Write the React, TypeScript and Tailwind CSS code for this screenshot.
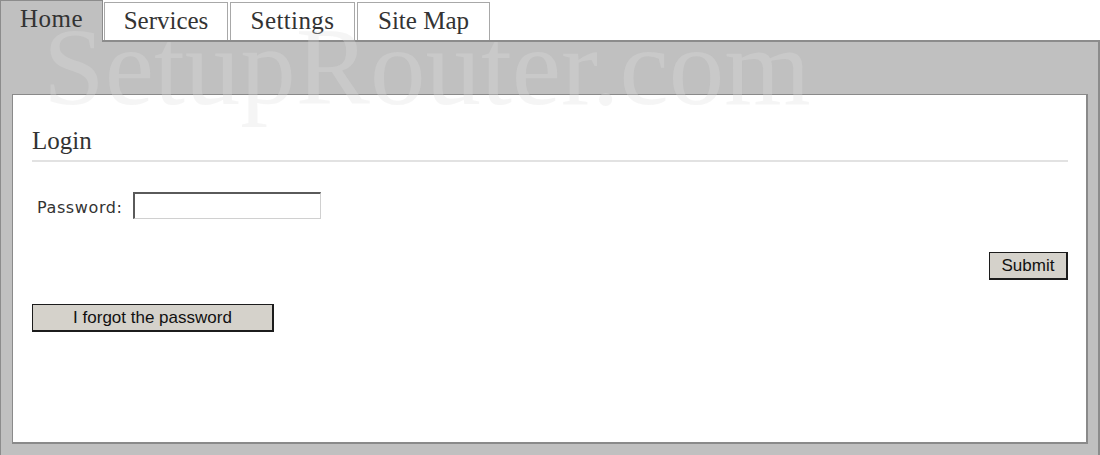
import React from "react";

const serif = "font-['Liberation_Serif','Times_New_Roman',serif]";
const sans = "font-['Liberation_Sans',Arial,sans-serif]";

export default function App() {
  return (
    <div className="relative w-[1100px] h-[455px] bg-white overflow-hidden flex flex-col">
      {/* Tabs */}
      <div className={`flex items-end h-[40px] ${serif} text-[25px] leading-[25px] text-[#333]`}>
        <div className="relative z-10 w-[103px] h-[42px] -mb-[2px] bg-[#c0c0c0] border-l border-t border-r border-[#8c8c8c] pt-[5px] text-center tracking-[0.5px]">
          Home
        </div>
        <div className="ml-[1px] w-[124px] h-[38px] bg-white border border-b-0 border-[#a8a8a8] pt-[5px] text-center">
          Services
        </div>
        <div className="ml-[2px] w-[125px] h-[38px] bg-white border border-b-0 border-[#a8a8a8] pt-[5px] text-center tracking-[0.4px]">
          Settings
        </div>
        <div className="ml-[2px] w-[133px] h-[38px] bg-white border border-b-0 border-[#a8a8a8] pt-[5px] text-center">
          Site Map
        </div>
      </div>

      {/* Panel */}
      <div className="flex-1 bg-[#c0c0c0] border-t-2 border-l border-r-2 border-[#8c8c8c] pt-[52px] pl-[11px] pr-[10px]">
        <div className="h-[350px] bg-white border border-r-2 border-b-2 border-[#8a8a8a] pt-[33px] pl-[19px] pr-[18px]">
          <div className={`${serif} text-[25px] leading-[25px] text-[#333]`}>Login</div>
          <div className="mt-[7px] border-t-2 border-[#e2e2e2]" />

          <div className="mt-[30px] flex items-center h-[27px]">
            <span className="ml-[5px] pt-[4px] font-['DejaVu_Sans',sans-serif] text-[16px] leading-[20px] tracking-[0.6px] text-[#333]">
              Password:
            </span>
            <input
              type="password"
              className="ml-[10px] w-[188px] h-[27px] bg-white border border-t-2 border-l-2 border-t-[#5a5a5a] border-l-[#5a5a5a] border-r-[#d0d0d0] border-b-[#d0d0d0] outline-none"
            />
          </div>

          <div className="mt-[33px] flex justify-end">
            <button
              className={`w-[79px] h-[28px] bg-[#d5d2cb] border border-r-2 border-b-2 border-[#1c1c1c] ${sans} text-[17px] leading-none text-[#111]`}
            >
              Submit
            </button>
          </div>

          <div className="mt-[24px]">
            <button
              className={`w-[242px] h-[28px] bg-[#d5d2cb] border border-r-2 border-b-2 border-[#1c1c1c] ${sans} text-[17px] leading-none text-[#111]`}
            >
              I forgot the password
            </button>
          </div>
        </div>
      </div>

      {/* Watermark overlay */}
      <div
        className={`pointer-events-none absolute left-[43px] top-[11px] z-20 ${serif} text-[111px] leading-[111px] text-[rgba(222,222,222,0.3)] whitespace-nowrap`}
      >
        SetupRouter.com
      </div>
    </div>
  );
}
